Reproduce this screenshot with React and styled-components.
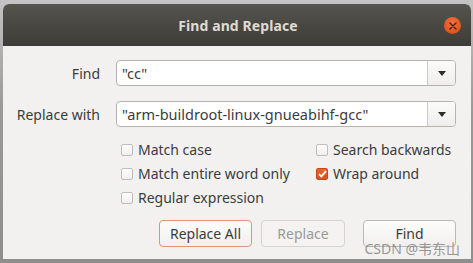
import React from "react"
import styled, { createGlobalStyle } from "styled-components"

const Global = createGlobalStyle`
  html, body {
    margin: 0;
    padding: 0;
  }
  body {
    width: 473px;
    height: 263px;
    overflow: hidden;
    background: linear-gradient(180deg, #c4c4c4 0%, #9a9a9a 40%, #8e8e8e 100%);
    font-family: "Noto Sans", "Open Sans", sans-serif;
  }
`

export default function App() {
    return (
        <Page>
            <Global />
            <Window>
                <TitleBar>
                    <Title>Find and Replace</Title>
                    <Close>
                        <svg width="8" height="8" viewBox="0 0 8 8">
                            <path d="M1 1 L7 7 M7 1 L1 7" stroke="#3a2418" strokeWidth="1.4" strokeLinecap="round" />
                        </svg>
                    </Close>
                </TitleBar>
                <Body>
                    <Form>
                        <Label>Find</Label>
                        <Combo>
                            <Entry>"cc"</Entry>
                            <Arrow><Triangle /></Arrow>
                        </Combo>
                        <Label>Replace with</Label>
                        <Combo>
                            <Entry>"arm-buildroot-linux-gnueabihf-gcc"</Entry>
                            <Arrow><Triangle /></Arrow>
                        </Combo>
                    </Form>
                    <Options>
                        <Option><Box /><span>Match case</span></Option>
                        <Option><Box /><span>Search backwards</span></Option>
                        <Option><Box /><span>Match entire word only</span></Option>
                        <Option>
                            <Box checked>
                                <svg width="9" height="8" viewBox="0 0 9 8">
                                    <path d="M1 4.2 L3.4 6.4 L8 1.2" stroke="#fff" strokeWidth="1.8" fill="none" />
                                </svg>
                            </Box>
                            <span>Wrap around</span>
                        </Option>
                        <Option><Box /><span>Regular expression</span></Option>
                    </Options>
                    <Buttons>
                        <Button $w={93} $focus>Replace All</Button>
                        <Button $w={84} $disabled>Replace</Button>
                        <Button $w={93} $gap={18}>Find</Button>
                    </Buttons>
                    <Watermark>CSDN @韦东山</Watermark>
                </Body>
            </Window>
        </Page>
    )
}

const Page = styled.div`
    padding: 4px 2px 0 3px;
`

const Window = styled.div`
    width: 468px;
    height: 255px;
    border-radius: 6px 6px 0 0;
    overflow: hidden;
    background: #f2f1f0;
    display: flex;
    flex-direction: column;
`

const TitleBar = styled.div`
    height: 42px;
    flex-shrink: 0;
    background: linear-gradient(180deg, #55544e 0%, #46453f 60%, #3d3c37 100%);
    display: flex;
    align-items: center;
    justify-content: center;
    position: relative;
`

const Title = styled.div`
    color: #dfdbd2;
    font-weight: bold;
    font-size: 14px;
    letter-spacing: 0.1px;
    margin-left: 2px;
`

const Close = styled.div`
    position: absolute;
    right: 10px;
    top: 13px;
    width: 17px;
    height: 17px;
    border-radius: 50%;
    background: radial-gradient(circle at 50% 35%, #f3703e 0%, #e2531d 70%, #c8431a 100%);
    display: flex;
    align-items: center;
    justify-content: center;
`

const Body = styled.div`
    flex: 1;
    position: relative;
    padding: 14px 14px 0 0;
    color: #3c3c3c;
    font-size: 14px;
`

const Form = styled.div`
    display: grid;
    grid-template-columns: 97px 340px;
    column-gap: 16px;
    row-gap: 15px;
    align-items: center;
`

const Label = styled.div`
    text-align: right;
`

const Combo = styled.div`
    height: 26px;
    box-sizing: border-box;
    border: 1px solid #b6b3ad;
    border-radius: 4px;
    background: #fff;
    display: flex;
    overflow: hidden;
`

const Entry = styled.div`
    flex: 1;
    padding-left: 5px;
    line-height: 24px;
    font-size: 14.5px;
    color: #3c3c3c;
    white-space: nowrap;
`

const Arrow = styled.div`
    width: 27px;
    border-left: 1px solid #cfccc7;
    background: linear-gradient(180deg, #fbfbfa 0%, #efeeec 100%);
    display: flex;
    align-items: center;
    justify-content: center;
`

const Triangle = styled.div`
    width: 0;
    height: 0;
    border-left: 4px solid transparent;
    border-right: 4px solid transparent;
    border-top: 5px solid #2c2c2c;
`

const Options = styled.div`
    display: grid;
    grid-template-columns: 195px auto;
    row-gap: 5px;
    margin: 13px 0 0 118px;
`

const Option = styled.div`
    display: flex;
    align-items: center;
    gap: 5px;
    height: 19px;
    white-space: nowrap;
`

const Box = styled.div`
    width: 12px;
    height: 12px;
    box-sizing: border-box;
    border-radius: 2px;
    border: 1px solid ${props => props.checked ? "#c24a1f" : "#c0bdb8"};
    background: ${props => props.checked ? "linear-gradient(180deg, #eb6433, #d94f1e)" : "linear-gradient(180deg, #fdfdfd, #f0efee)"};
    display: flex;
    align-items: center;
    justify-content: center;
`

const Buttons = styled.div`
    display: flex;
    gap: 9px;
    margin: 13px 0 0 156px;
`

const Button = styled.div`
    width: ${props => props.$w}px;
    margin-left: ${props => props.$gap ? props.$gap - 9 : 0}px;
    height: 27px;
    box-sizing: border-box;
    border-radius: 4px;
    border: 1px solid ${props => props.$focus ? "#e3927a" : props.$disabled ? "#d6d3cf" : "#bcb9b3"};
    background: ${props => props.$disabled ? "#f4f3f2" : "linear-gradient(180deg, #fcfcfb 0%, #f1f0ef 100%)"};
    color: ${props => props.$disabled ? "#9a9996" : "#3c3c3c"};
    display: flex;
    align-items: center;
    justify-content: center;
    font-size: 14px;
`

const Watermark = styled.div`
    position: absolute;
    right: 11px;
    bottom: 1px;
    font-size: 14px;
    color: rgba(120, 120, 120, 0.75);
    font-family: "Noto Sans", "Noto Sans CJK SC", sans-serif;
`
